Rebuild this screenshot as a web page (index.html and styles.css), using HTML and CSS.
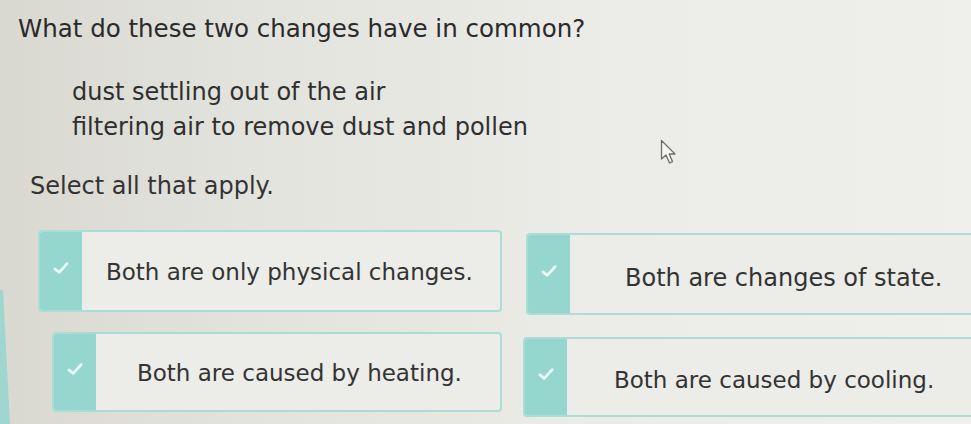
FILE: index.html
```html
<!DOCTYPE html>
<html>
<head>
<meta charset="utf-8">
<link rel="stylesheet" href="styles.css">
</head>
<body>
<div class="page">
  <div class="edge"></div>
  <h1 class="question">What do these two changes have in common?</h1>
  <div class="items">
    <div class="item">dust settling out of the air</div>
    <div class="item">filtering air to remove dust and pollen</div>
  </div>
  <div class="instruction">Select all that apply.</div>
  <div class="choices">
    <div class="choice c1">
      <div class="strip"><svg class="check" viewBox="0 0 20 16"><path d="M3 9 L8 13 L17 3" fill="none" stroke="#eef8f6" stroke-width="3.2" stroke-linecap="round" stroke-linejoin="round"/></svg></div>
      <div class="label">Both are only physical changes.</div>
    </div>
    <div class="choice c2">
      <div class="strip"><svg class="check" viewBox="0 0 20 16"><path d="M3 9 L8 13 L17 3" fill="none" stroke="#eef8f6" stroke-width="3.2" stroke-linecap="round" stroke-linejoin="round"/></svg></div>
      <div class="label">Both are changes of state.</div>
    </div>
    <div class="choice c3">
      <div class="strip"><svg class="check" viewBox="0 0 20 16"><path d="M3 9 L8 13 L17 3" fill="none" stroke="#eef8f6" stroke-width="3.2" stroke-linecap="round" stroke-linejoin="round"/></svg></div>
      <div class="label">Both are caused by heating.</div>
    </div>
    <div class="choice c4">
      <div class="strip"><svg class="check" viewBox="0 0 20 16"><path d="M3 9 L8 13 L17 3" fill="none" stroke="#eef8f6" stroke-width="3.2" stroke-linecap="round" stroke-linejoin="round"/></svg></div>
      <div class="label">Both are caused by cooling.</div>
    </div>
  </div>
  <svg class="cursor" viewBox="0 0 18 28" width="18" height="28"><path d="M1.5 1.5 L1.5 20 L6 16 L9.5 24 L12.5 22.6 L9.2 15 L15 15 Z" fill="#f4f4f2" stroke="#6e6e6c" stroke-width="1.3" stroke-linejoin="round"/></svg>
</div>
</body>
</html>
```
FILE: styles.css
```css
html, body {
  margin: 0;
  padding: 0;
}
body {
  width: 971px;
  height: 424px;
  overflow: hidden;
  font-family: "DejaVu Sans", Verdana, sans-serif;
  color: #2f2f2f;
}
.page {
  position: relative;
  width: 971px;
  height: 424px;
  box-sizing: border-box;
  padding: 14px 0 0 18px;
  background: linear-gradient(90deg, #d9d9d2 0%, #e3e3dd 25%, #ebebe7 60%, #efefec 100%);
  display: flex;
  flex-direction: column;
}
.edge {
  position: absolute;
  left: 0;
  top: 290px;
  width: 10px;
  height: 134px;
  background: #9fd6cf;
  clip-path: polygon(0 0, 30% 0, 100% 100%, 0 100%);
}
.question {
  margin: 0;
  font-size: 24.5px;
  font-weight: normal;
  line-height: 30px;
  color: #2a2a2a;
}
.items {
  margin: 31px 0 0 54px;
  display: flex;
  flex-direction: column;
}
.item {
  font-size: 24px;
  line-height: 35px;
  color: #2f2f2f;
}
.instruction {
  margin: 26px 0 0 12px;
  font-size: 24px;
  line-height: 30px;
  color: #333;
}
.choices {
  margin: 29px 0 0 20px;
  display: grid;
  grid-template-columns: 464px 460px;
  column-gap: 24px;
  row-gap: 17px;
}
.choice {
  display: flex;
  height: 82px;
  box-sizing: border-box;
  border: 2px solid #acdcd6;
  border-radius: 4px;
  background: #ecece8;
  overflow: hidden;
}
.c2 { margin-top: 3px; }
.c3 { margin-left: 14px; height: 80px; }
.c4 { margin-top: 5px; margin-left: -3px; height: 80px; }
.strip {
  width: 42px;
  flex: none;
  background: #95d6cf;
  display: flex;
  align-items: center;
  justify-content: center;
}
.check {
  width: 18px;
  height: 14px;
  margin-top: -6px;
}
.label {
  flex: 1;
  display: flex;
  align-items: center;
  font-size: 23px;
  color: #333;
  white-space: nowrap;
}
.c1 .label { padding-left: 24px; padding-top: 2px; }
.c2 .label { padding-left: 55px; font-size: 24px; padding-top: 8px; }
.c3 .label { padding-left: 41px; padding-top: 1px; }
.c4 .label { padding-left: 47px; padding-top: 5px; }
.cursor {
  position: absolute;
  left: 660px;
  top: 139px;
}
```
